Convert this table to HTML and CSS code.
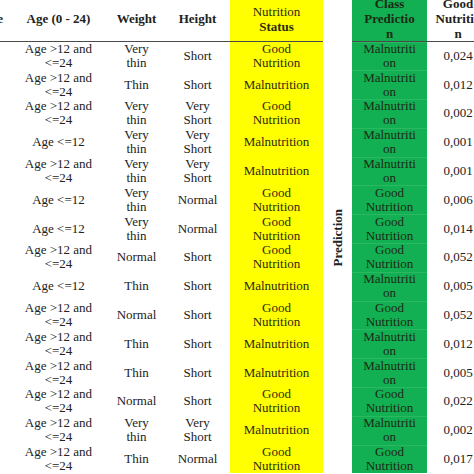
FILE: index.html
```html
<!DOCTYPE html>
<html>
<head>
<meta charset="utf-8">
<link rel="stylesheet" href="styles.css">
</head>
<body>
<table class="tbl">
  <colgroup>
    <col class="c0"><col class="c1"><col class="c2"><col class="c3"><col class="c4"><col class="c5"><col class="c6"><col class="c7">
  </colgroup>
  <thead>
    <tr class="head">
      <th class="rule">Rule</th>
      <th>Age (0 - 24)</th>
      <th>Weight</th>
      <th>Height</th>
      <th class="yel"><span class="reg">Nutrition</span><br>Status</th>
      <th class="gap"></th>
      <th class="grn brk">Class Prediction</th>
      <th class="brk">Good Nutrition</th>
    </tr>
  </thead>
  <tbody>
    <tr><td></td><td>Age &gt;12 and &lt;=24</td><td>Very thin</td><td>Short</td><td class="yel">Good Nutrition</td><td class="gap" rowspan="15"><div class="vert">Prediction</div></td><td class="grn brk">Malnutrition</td><td>0,024</td></tr>
    <tr><td></td><td>Age &gt;12 and &lt;=24</td><td>Thin</td><td>Short</td><td class="yel">Malnutrition</td><td class="grn brk">Malnutrition</td><td>0,012</td></tr>
    <tr><td></td><td>Age &gt;12 and &lt;=24</td><td>Very thin</td><td>Very Short</td><td class="yel">Good Nutrition</td><td class="grn brk">Malnutrition</td><td>0,002</td></tr>
    <tr><td></td><td>Age &lt;=12</td><td>Very thin</td><td>Very Short</td><td class="yel">Malnutrition</td><td class="grn brk">Malnutrition</td><td>0,001</td></tr>
    <tr><td></td><td>Age &gt;12 and &lt;=24</td><td>Very thin</td><td>Very Short</td><td class="yel">Malnutrition</td><td class="grn brk">Malnutrition</td><td>0,001</td></tr>
    <tr><td></td><td>Age &lt;=12</td><td>Very thin</td><td>Normal</td><td class="yel">Good Nutrition</td><td class="grn brk">Good Nutrition</td><td>0,006</td></tr>
    <tr><td></td><td>Age &lt;=12</td><td>Very thin</td><td>Normal</td><td class="yel">Good Nutrition</td><td class="grn brk">Good Nutrition</td><td>0,014</td></tr>
    <tr><td></td><td>Age &gt;12 and &lt;=24</td><td>Normal</td><td>Short</td><td class="yel">Good Nutrition</td><td class="grn brk">Good Nutrition</td><td>0,052</td></tr>
    <tr><td></td><td>Age &lt;=12</td><td>Thin</td><td>Short</td><td class="yel">Malnutrition</td><td class="grn brk">Malnutrition</td><td>0,005</td></tr>
    <tr><td></td><td>Age &gt;12 and &lt;=24</td><td>Normal</td><td>Short</td><td class="yel">Good Nutrition</td><td class="grn brk">Good Nutrition</td><td>0,052</td></tr>
    <tr><td></td><td>Age &gt;12 and &lt;=24</td><td>Thin</td><td>Short</td><td class="yel">Malnutrition</td><td class="grn brk">Malnutrition</td><td>0,012</td></tr>
    <tr><td></td><td>Age &gt;12 and &lt;=24</td><td>Thin</td><td>Short</td><td class="yel">Malnutrition</td><td class="grn brk">Malnutrition</td><td>0,005</td></tr>
    <tr><td></td><td>Age &gt;12 and &lt;=24</td><td>Normal</td><td>Short</td><td class="yel">Good Nutrition</td><td class="grn brk">Good Nutrition</td><td>0,022</td></tr>
    <tr><td></td><td>Age &gt;12 and &lt;=24</td><td>Very thin</td><td>Very Short</td><td class="yel">Malnutrition</td><td class="grn brk">Malnutrition</td><td>0,002</td></tr>
    <tr><td></td><td>Age &gt;12 and &lt;=24</td><td>Thin</td><td>Normal</td><td class="yel">Good Nutrition</td><td class="grn brk">Good Nutrition</td><td>0,017</td></tr>
  </tbody>
</table>
</body>
</html>
```
FILE: styles.css
```css
html, body {
  margin: 0;
  padding: 0;
  background: #ffffff;
  overflow: hidden;
}
body {
  font-family: "Liberation Serif", "Times New Roman", serif;
  font-size: 13px;
  line-height: 14px;
  color: #222222;
}
.tbl {
  table-layout: fixed;
  border-collapse: collapse;
  width: 540px;
  margin-left: -51px;
  margin-top: -4px;
}
.c0 { width: 60px; }
.c1 { width: 99px; }
.c2 { width: 57px; }
.c3 { width: 65px; }
.c4 { width: 93px; }
.c5 { width: 29px; }
.c6 { width: 75px; }
.c7 { width: 62px; }

.tbl th, .tbl td {
  text-align: center;
  vertical-align: middle;
  padding: 0;
}
.tbl th {
  font-weight: bold;
  height: 44px;
  line-height: 15px;
  border-bottom: 1.5px solid #4a4a4a;
}
.tbl tbody tr {
  height: 28.8px;
}
.tbl td:nth-child(2), .tbl th:nth-child(2) { padding: 0 8px; }
.tbl td:nth-child(3), .tbl th:nth-child(3) { padding: 0 5px; }
.tbl td:nth-child(4), .tbl th:nth-child(4) { padding: 0 6px; }
.tbl th.rule {
  text-align: right;
  padding-right: 6px;
}
.yel {
  background: #ffff00;
  padding: 0 10px !important;
  color: #2b2b0a;
}
.reg { font-weight: normal; }
.grn {
  background: #12b052;
  padding: 0 10px !important;
  color: #1c2a14;
  box-shadow: inset 0 1px 0 rgba(255, 255, 255, 0.1);
}
.brk {
  overflow-wrap: anywhere;
}
.tbl th:last-child {
  padding: 0 8px;
}
.tbl th.gap {
  border-bottom: none;
}
td.gap {
  padding-bottom: 40px !important;
}
.vert {
  writing-mode: vertical-rl;
  transform: rotate(180deg);
  font-weight: bold;
  margin: 0 auto;
  line-height: 16px;
}
```
